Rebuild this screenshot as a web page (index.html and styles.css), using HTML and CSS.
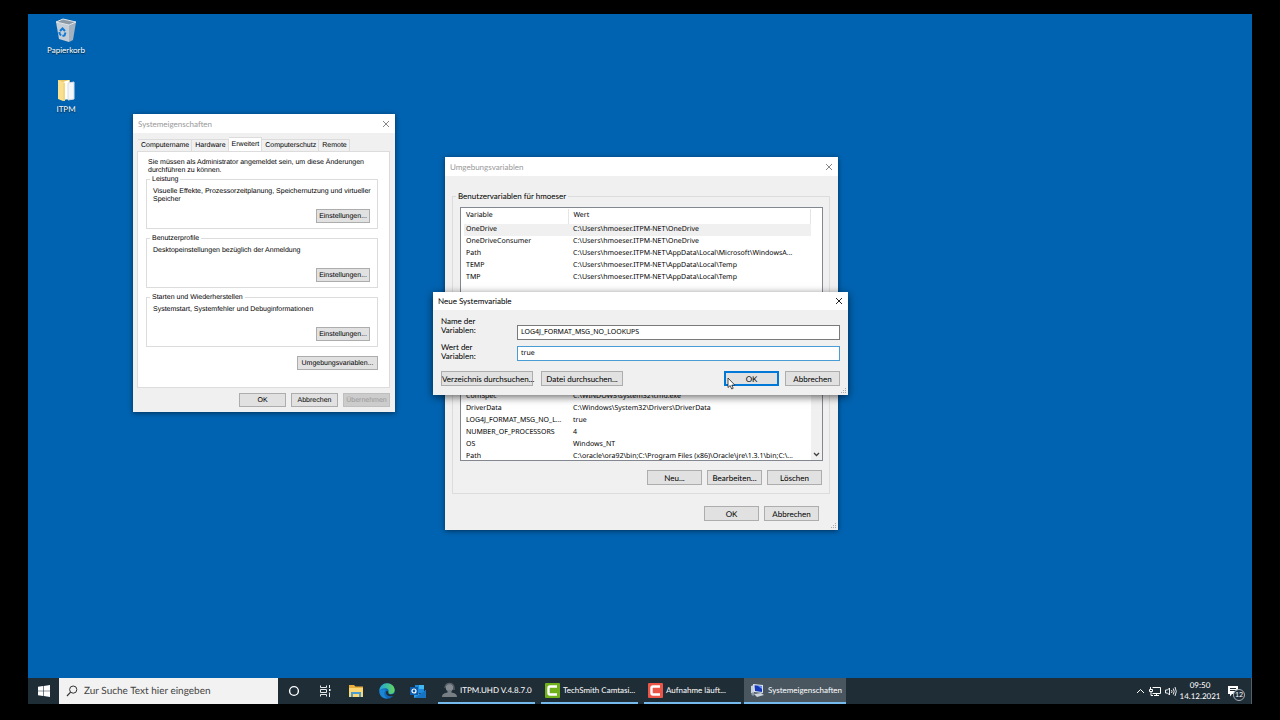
FILE: index.html
```html
<!DOCTYPE html>
<html lang="de">
<head>
    <meta charset="utf-8">
    <title>Desktop</title>
    <link rel="stylesheet" href="styles.css">
</head>
<body>
    <main class="desktop">
        <div class="shortcuts">
            <a class="shortcut" href="#">
                <svg width="24" height="26" viewBox="0 0 24 26">
                    <path d="M2 4 L9 1 L22 4 L15 7 Z" fill="#8d9aa5"/>
                    <path d="M2 4 L15 7 L15 24 L5 21 Z" fill="#c3ced8"/>
                    <path d="M15 7 L22 4 L19 22 L15 24 Z" fill="#a4b2bf"/>
                    <path d="M2 4 L9 1 L22 4 L15 7 Z" fill="none" stroke="#dfe6ec" stroke-width="1"/>
                    <path d="M6 13 L8.500 10.500 L11 13 M11.500 14.500 L10.500 17.500 L8.500 18 M7 17.500 L5.500 15.500 L5.500 14" fill="none" stroke="#1379d1" stroke-width="2"/>
                </svg>
                <span>Papierkorb</span>
            </a>
            <a class="shortcut" href="#">
                <svg width="24" height="26" viewBox="0 0 24 26">
                    <path d="M4 3 H16 V22 H4 Z" fill="#e8c667"/>
                    <path d="M4 3 L9 5 V24 L4 22 Z" fill="#f9e08e"/>
                    <path d="M9 5 L15 3 V22 L9 23 Z" fill="#fff"/>
                    <path d="M14 6 L20 5 V22 L14 23 Z" fill="#f3f6fa" stroke="#d6dde5" stroke-width="1"/>
                    <path d="M9 5 L11 6 V24 L9 24 Z" fill="#f3d884"/>
                </svg>
                <span>ITPM</span>
            </a>
        </div>

        <section class="window system">
            <header class="titlebar inactive">
                <h2>Systemeigenschaften</h2>
                <button class="close" aria-label="Schließen"><svg width="8" height="8" viewBox="0 0 8 8"><path d="M1 1 L7 7 M7 1 L1 7"/></svg></button>
            </header>
            <div class="system-body">
                <nav class="tabs">
                    <button>Computername</button>
                    <button>Hardware</button>
                    <button class="selected">Erweitert</button>
                    <button>Computerschutz</button>
                    <button>Remote</button>
                </nav>
                <div class="pane">
                    <p class="hint">Sie müssen als Administrator angemeldet sein, um diese Änderungen durchführen zu können.</p>
                    <fieldset>
                        <legend>Leistung</legend>
                        <div class="group">
                            <p>Visuelle Effekte, Prozessorzeitplanung, Speichernutzung und virtueller Speicher</p>
                            <button class="btn">Einstellungen...</button>
                        </div>
                    </fieldset>
                    <fieldset>
                        <legend>Benutzerprofile</legend>
                        <div class="group">
                            <p>Desktopeinstellungen bezüglich der Anmeldung</p>
                            <button class="btn">Einstellungen...</button>
                        </div>
                    </fieldset>
                    <fieldset>
                        <legend>Starten und Wiederherstellen</legend>
                        <div class="group">
                            <p>Systemstart, Systemfehler und Debuginformationen</p>
                            <button class="btn">Einstellungen...</button>
                        </div>
                    </fieldset>
                    <button class="btn env-btn">Umgebungsvariablen...</button>
                </div>
                <footer class="system-actions">
                    <button class="btn">OK</button>
                    <button class="btn">Abbrechen</button>
                    <button class="btn" disabled>Übernehmen</button>
                </footer>
            </div>
        </section>

        <section class="window env">
            <header class="titlebar inactive">
                <h2>Umgebungsvariablen</h2>
                <button class="close" aria-label="Schließen"><svg width="8" height="8" viewBox="0 0 8 8"><path d="M1 1 L7 7 M7 1 L1 7"/></svg></button>
            </header>
            <div class="env-body">
                <fieldset class="user-vars">
                    <legend>Benutzervariablen für hmoeser</legend>
                    <div class="list">
                        <table>
                            <thead>
                                <tr><th>Variable</th><th>Wert</th></tr>
                            </thead>
                            <tbody>
                                <tr class="current"><td>OneDrive</td><td>C:\Users\hmoeser.ITPM-NET\OneDrive</td></tr>
                                <tr><td>OneDriveConsumer</td><td>C:\Users\hmoeser.ITPM-NET\OneDrive</td></tr>
                                <tr><td>Path</td><td>C:\Users\hmoeser.ITPM-NET\AppData\Local\Microsoft\WindowsA...</td></tr>
                                <tr><td>TEMP</td><td>C:\Users\hmoeser.ITPM-NET\AppData\Local\Temp</td></tr>
                                <tr><td>TMP</td><td>C:\Users\hmoeser.ITPM-NET\AppData\Local\Temp</td></tr>
                            </tbody>
                        </table>
                    </div>
                </fieldset>
                <fieldset class="system-vars">
                    <div class="list scrolled">
                        <table>
                            <tbody>
                                <tr><td>ComSpec</td><td>C:\WINDOWS\system32\cmd.exe</td></tr>
                                <tr><td>DriverData</td><td>C:\Windows\System32\Drivers\DriverData</td></tr>
                                <tr><td>LOG4J_FORMAT_MSG_NO_L...</td><td>true</td></tr>
                                <tr><td>NUMBER_OF_PROCESSORS</td><td>4</td></tr>
                                <tr><td>OS</td><td>Windows_NT</td></tr>
                                <tr><td>Path</td><td>C:\oracle\ora92\bin;C:\Program Files (x86)\Oracle\jre\1.3.1\bin;C:\...</td></tr>
                            </tbody>
                        </table>
                        <div class="scrollbar">
                            <svg width="7" height="5" viewBox="0 0 7 5"><path d="M1 1 L3.500 3.500 L6 1" fill="none" stroke="#404040" stroke-width="1.300"/></svg>
                        </div>
                    </div>
                    <div class="actions">
                        <button class="btn">Neu...</button>
                        <button class="btn">Bearbeiten...</button>
                        <button class="btn">Löschen</button>
                    </div>
                </fieldset>
                <footer class="actions env-actions">
                    <button class="btn">OK</button>
                    <button class="btn">Abbrechen</button>
                </footer>
            </div>
            <svg class="grip" width="6" height="6" viewBox="0 0 6 6"><path d="M4 0h1v1h-1z M2 2h1v1h-1z M4 2h1v1h-1z M0 4h1v1h-1z M2 4h1v1h-1z M4 4h1v1h-1z"/></svg>
        </section>

        <section class="window dialog">
            <header class="titlebar">
                <h2>Neue Systemvariable</h2>
                <button class="close" aria-label="Schließen"><svg width="8" height="8" viewBox="0 0 8 8"><path d="M1 1 L7 7 M7 1 L1 7"/></svg></button>
            </header>
            <form class="dialog-body">
                <div class="field">
                    <label for="varName">Name der Variablen:</label>
                    <input type="text" id="varName" value="LOG4J_FORMAT_MSG_NO_LOOKUPS">
                </div>
                <div class="field">
                    <label for="varValue">Wert der Variablen:</label>
                    <input type="text" id="varValue" class="focused" value="true">
                </div>
                <div class="dialog-actions">
                    <button type="button" class="btn browse-dir">Verzeichnis durchsuchen...</button>
                    <button type="button" class="btn browse-file">Datei durchsuchen...</button>
                    <button type="button" class="btn default">OK</button>
                    <button type="button" class="btn">Abbrechen</button>
                </div>
            </form>
            <svg class="grip" width="6" height="6" viewBox="0 0 6 6"><path d="M4 0h1v1h-1z M2 2h1v1h-1z M4 2h1v1h-1z M0 4h1v1h-1z M2 4h1v1h-1z M4 4h1v1h-1z"/></svg>
        </section>

        <svg class="cursor" width="9" height="13" viewBox="0 0 9 13">
            <path d="M1 1 V10.500 L3.200 8.600 L4.700 12 L6.200 11.300 L4.800 8.100 H7.800 Z" fill="#fff" stroke="#222" stroke-width=".8"/>
        </svg>
    </main>

    <footer class="taskbar">
        <button class="start" aria-label="Start">
            <svg width="12" height="12" viewBox="0 0 12 12" fill="#fff"><path d="M0 1.700 L5.200 1 V5.700 H0 Z M5.800 .9 L12 0 V5.700 H5.800 Z M0 6.300 H5.200 V11 L0 10.300 Z M5.800 6.300 H12 V12 L5.800 11.100 Z"/></svg>
        </button>
        <label class="search">
            <svg width="12" height="12" viewBox="0 0 12 12"><circle cx="7.200" cy="4.600" r="3.600" fill="none" stroke="#333"/><path d="M4.600 7.200 L1 11" stroke="#333" stroke-width="1.200"/></svg>
            <input type="text" placeholder="Zur Suche Text hier eingeben" aria-label="Suche">
        </label>
        <div class="pinned">
            <button aria-label="Cortana"><svg width="12" height="12" viewBox="0 0 12 12"><circle cx="6" cy="6" r="4.400" fill="none" stroke="#fff" stroke-width="1.400"/></svg></button>
            <button aria-label="Taskansicht"><svg width="12" height="12" viewBox="0 0 12 12" fill="none" stroke="#e6eaed"><path d="M1.500 0.500 V2.500 H7.500 V0.500 M1.500 11.500 V9.500 H7.500 V11.500 M1.500 4.500 H7.500 V7.500 H1.500 Z M10.500 0 V3 M10.500 7.500 V12"/><path d="M10 4h1.500v2H10z" fill="#fff" stroke="none"/></svg></button>
            <button aria-label="Explorer"><svg width="16" height="14" viewBox="0 0 16 14"><path d="M1 1 H6 L7.500 2.500 H15 V13 H1 Z" fill="#e9ae3c"/><path d="M1 4 H15 V13 H1 Z" fill="#fbd672"/><path d="M3 8 H13 V13 H11 V10 H5 V13 H3 Z" fill="#4a9bd0"/></svg></button>
            <button aria-label="Edge">
                <svg width="16" height="16" viewBox="0 0 16 16">
                    <defs><linearGradient id="edgeTop" x1="0" x2="1"><stop offset="0" stop-color="#1fa5df"/><stop offset="1" stop-color="#62d65b"/></linearGradient></defs>
                    <circle cx="8" cy="8" r="7.700" fill="#1268b8"/>
                    <path d="M.4 8 C.5 3.500 4 .3 8 .3 C12.500 .3 15.700 3.500 15.700 7 C15.700 9.500 13.800 11 11.500 11 C9.800 11 9 10.300 9.300 9.600 C10.500 7.500 9 5.300 6.300 5.300 C3.500 5.300 1.200 6.500 .4 8 Z" fill="url(#edgeTop)"/>
                    <path d="M9.300 9.600 C8.800 11.300 11.500 12.300 15 10.700 L16 11 L14.300 12.700 C11 14.300 6.500 12.500 7 8.700 C7.600 7.500 9.300 8 9.300 9.600 Z" fill="#1f2d37"/>
                    <path d="M.4 8 C1.500 6.500 4.500 5.500 7 6.700 C4.500 8.500 4.500 13 8.500 15.300 C4 16 .2 12.500 .4 8 Z" fill="#1b86d5"/>
                </svg>
            </button>
            <button aria-label="Outlook"><svg width="16" height="14" viewBox="0 0 16 14"><path d="M5 1 H14 V9 H5 Z" fill="#1c89dc"/><path d="M9 1 H14 V5 H9 Z" fill="#43b8f0"/><path d="M4 7 L10 10 L16 6 V14 H4 Z" fill="#2f9fe5"/><path d="M4 14 L16 6 V14 Z" fill="#1674c3"/><path d="M0 3 H8 V11 H0 Z" fill="#0c5bab"/><circle cx="4" cy="7" r="2" fill="none" stroke="#fff" stroke-width="1.200"/></svg></button>
        </div>
        <div class="tasks">
            <button class="task">
                <svg width="15" height="16" viewBox="0 0 15 16"><circle cx="7.500" cy="5.500" r="3.800" fill="#858c91"/><path d="M0 15 C0 11.500 3 11 5.500 10.500 V8 H9.500 V10.500 C12 11 15 11.500 15 15 Z" fill="#777f85"/><path d="M3 6 C3 0 12 0 12 6 V8" fill="none" stroke="#59626a" stroke-width="1.400"/></svg>
                <span>ITPM.UHD V.4.8.7.0</span>
            </button>
            <button class="task">
                <svg width="15" height="15" viewBox="0 0 15 15"><rect width="15" height="15" rx="1" fill="#6fb01c"/><path d="M12 3.500 H5 Q3.500 3.500 3.500 5 V10 Q3.500 11.500 5 11.500 H12" fill="none" stroke="#fff" stroke-width="2.400"/></svg>
                <span>TechSmith Camtasi...</span>
            </button>
            <button class="task">
                <svg width="15" height="15" viewBox="0 0 15 15"><rect width="15" height="15" rx="1" fill="#ea5548"/><path d="M12 3.500 H5 Q3.500 3.500 3.500 5 V10 Q3.500 11.500 5 11.500 H12" fill="none" stroke="#fff" stroke-width="2.400"/></svg>
                <span>Aufnahme läuft...</span>
            </button>
            <button class="task active">
                <svg width="15" height="15" viewBox="0 0 15 15"><path d="M1 3 L4 2 V11 L1 10 Z" fill="#c7d0da"/><path d="M3 1 L13 2 V10 L4 9 Z" fill="#dce4ee"/><path d="M4.500 2.300 L12 3 V9 L5 8 Z" fill="#1738b8"/><path d="M8 3 L12 3.200 V6 Z" fill="#6e9cf0"/><path d="M4 11 L11 10 L14 12 L7 14 Z" fill="#cbd3dc"/><path d="M1 11 L3 9 L5 11 L3 13 Z" fill="#8b98a8"/></svg>
                <span>Systemeigenschaften</span>
            </button>
        </div>
        <div class="tray">
            <svg width="9" height="6" viewBox="0 0 9 6"><path d="M1 5 L4.500 1.500 L8 5" fill="none" stroke="#fff"/></svg>
            <svg width="12" height="11" viewBox="0 0 12 11" fill="none" stroke="#fff"><path d="M3.500 1.500 H11.500 V7.500 H3.500 M5 9.500 H10 M7.500 7.500 V9.500 M1.500 1 V3 M.5 3.500 H3.500 V5.500 H.5 Z M2 6 V9.500 H4"/></svg>
            <svg width="12" height="11" viewBox="0 0 12 11" fill="none" stroke="#fff"><path d="M.5 4 H2.500 L4.500 2 V9 L2.500 7 H.5 Z M6.500 4 Q7.500 5.500 6.500 7 M8.300 2.500 Q10 5.500 8.300 8.500 M10 1 Q12.500 5.500 10 10" stroke-width=".9"/></svg>
            <time class="clock" datetime="2021-12-14T09:50"><span>09:50</span><span>14.12.2021</span></time>
            <button class="notify" aria-label="Benachrichtigungen">
                <svg width="12" height="11" viewBox="0 0 12 11"><path d="M1 0 H11 V8 H5 L3 10.500 V8 H1 Z" fill="#fff"/><path d="M3 2.500 H9 M3 4.500 H9" stroke="#1f2d37"/></svg>
                <span class="badge">12</span>
            </button>
        </div>
    </footer>
</body>
</html>
```

FILE: styles.css
```css
* {
    box-sizing: border-box;
}

body {
    margin: 0;
    padding: 14px 28px 16px;
    height: 100vh;
    display: flex;
    flex-direction: column;
    background: #000;
    color: #000;
    font-family: Lato, "Noto Sans", sans-serif;
    font-size: 8px;
    line-height: 12px;
    text-rendering: geometricPrecision;
    overflow: hidden;
}

button, input {
    font: inherit;
    color: inherit;
    margin: 0;
    padding: 0;
    border: none;
    background: none;
    text-rendering: inherit;
}

h2, p {
    margin: 0;
    font-size: inherit;
    font-weight: normal;
}

svg {
    display: block;
    flex: none;
}

fieldset {
    margin: 0;
    padding: 0;
    min-width: 0;
    border: 1px solid #dcdcdc;
}

legend {
    margin-left: 3px;
    padding: 0 2px;
}

/* desktop */
.desktop {
    position: relative;
    flex: 1;
    background: #0063b1;
}

.shortcuts {
    display: flex;
    flex-direction: column;
    gap: 21px;
    width: 76px;
    padding-top: 4px;
}

.shortcut {
    display: flex;
    flex-direction: column;
    align-items: center;
    color: #fff;
    text-decoration: none;
    text-shadow: 0 1px 1px #023;
}

/* windows */
.window {
    position: absolute;
    background: #f0f0f0;
    box-shadow: 0 1px 5px rgba(0, 0, 0, 0.5);
}

.titlebar {
    display: flex;
    align-items: center;
    justify-content: space-between;
    height: 19px;
    padding: 0 5px;
    background: #fff;
}

.close svg {
    fill: none;
    stroke: #222;
}

.inactive {
    color: #999;
}

.inactive .close svg {
    stroke: #888;
}

.btn {
    height: 15px;
    min-width: 55px;
    line-height: 12px;
    border: 1px solid #adadad;
    background: #e1e1e1;
    white-space: nowrap;
}

.grip {
    position: absolute;
    right: 1px;
    bottom: 1px;
    fill: #aaa;
}

/* system properties */
.system {
    left: 105px;
    top: 100px;
    width: 262px;
    line-height: 8px;
}

.system-body {
    padding: 4px 5px 5px 4px;
    font-family: "Liberation Sans", Arial, sans-serif;
    font-size: 7px;
}

.tabs {
    display: flex;
    align-items: flex-end;
    padding-left: 1px;
}

.tabs button {
    height: 12px;
    padding: 1px 2px 0 3px;
    border: 1px solid #dcdcdc;
    border-bottom: none;
    border-left: none;
}

.tabs .selected {
    height: 14px;
    background: #fff;
}

.pane {
    display: flex;
    flex-direction: column;
    padding: 7px 11px 17px 8px;
    background: #fff;
    border: 1px solid #dcdcdc;
}

.hint {
    padding: 0 2px;
}

.pane fieldset {
    margin-bottom: 5px;
}

.pane legend {
    line-height: 9px;
}

.group {
    display: flex;
    flex-direction: column;
    justify-content: space-between;
    align-items: flex-start;
    min-height: 44px;
    padding: 4px 0 5px 6px;
}

.system .btn {
    height: 14px;
    min-width: 47px;
    line-height: 11px;
    padding: 0 2px;
}

.group .btn, .env-btn {
    align-self: flex-end;
}

.group .btn {
    margin-right: 7px;
}

.system .env-btn {
    min-width: 81px;
    margin-top: 4px;
}

.system-actions {
    display: flex;
    justify-content: flex-end;
    gap: 5px;
    padding-top: 5px;
}

.btn:disabled {
    color: #999;
    background: #ccc;
    border-color: #bfbfbf;
}

/* environment variables */
.env {
    left: 417px;
    top: 143px;
    width: 393px;
}

.env-body {
    padding: 14px 8px 9px 7px;
}

.user-vars {
    padding: 5px 0 7px;
}

.system-vars {
    margin-top: 14px;
    padding: 7px 0 8px;
}

.list {
    display: flex;
    height: 92px;
    margin: 0 6px 0 7px;
    padding: 1px 0 0 3px;
    border: 1px solid #828790;
    background: #fff;
    overflow: hidden;
}

.list table {
    width: 347px;
    flex: none;
    table-layout: fixed;
    border-collapse: collapse;
    align-self: flex-start;
}

.list th, .list td {
    height: 12px;
    padding: 0 0 0 5px;
    text-align: left;
    font-weight: normal;
    white-space: nowrap;
}

.list table, .field input {
    font-family: "Noto Sans", "Open Sans", sans-serif;
    font-size: 7px;
}

.list th {
    height: 15px;
    padding-bottom: 2px;
    border-right: 1px solid #e5e5e5;
}

.list th:first-child, .list td:first-child {
    width: 104px;
    padding-left: 2px;
}

.list .current {
    background: #f0f0f0;
}

.list.scrolled {
    height: 132px;
    padding-top: 0;
}

.list.scrolled table {
    margin-top: 61px;
}

.scrollbar {
    display: flex;
    align-items: flex-end;
    justify-content: center;
    flex: 1;
    padding-bottom: 3px;
    background: #f0f0f0;
}

.actions {
    display: flex;
    justify-content: flex-end;
    gap: 5px;
    padding: 9px 7px 0 0;
}

.env-actions {
    padding: 12px 11px 0 0;
}

/* new variable dialog */
.dialog {
    left: 405px;
    top: 278px;
    width: 415px;
    box-shadow: 0 2px 8px rgba(0, 0, 0, 0.6);
}

.dialog .titlebar {
    height: 18px;
}

.dialog-body {
    display: flex;
    flex-direction: column;
    gap: 3px;
    padding: 7px 8px 9px;
}

.field {
    display: grid;
    grid-template-columns: 50px 1fr;
    column-gap: 26px;
    align-items: end;
}

.field label {
    align-self: start;
    line-height: 9px;
}

.field input {
    height: 15px;
    padding: 0 3px;
    border: 1px solid #7a7a7a;
    background: #fff;
}

.field:first-child input {
    margin-top: 8px;
}

.field .focused {
    border-color: #4a9cd4;
}

.dialog-actions {
    display: flex;
    gap: 6px;
    padding-top: 7px;
}

.browse-dir {
    width: 92px;
    margin-right: 2px;
}

.browse-file {
    width: 82px;
    margin-right: auto;
}

.btn.default {
    border: 2px solid #0078d7;
    line-height: 10px;
}

.cursor {
    position: absolute;
    left: 699px;
    top: 363px;
}

/* taskbar */
.taskbar {
    display: flex;
    height: 26px;
    background: #1f2d37;
    color: #fff;
}

.start {
    display: flex;
    align-items: center;
    justify-content: center;
    width: 31px;
}

.search {
    display: flex;
    align-items: center;
    gap: 6px;
    width: 219px;
    padding: 0 7px;
    background: #f2f2f2;
    font-size: 10px;
}

.search input {
    flex: 1;
    min-width: 0;
    outline: none;
}

.search input::placeholder {
    color: #444;
    opacity: 1;
}

.pinned {
    display: flex;
}

.pinned button {
    display: flex;
    align-items: center;
    justify-content: center;
    width: 31px;
}

.tasks {
    display: flex;
    gap: 6px;
    margin-left: 5px;
}

.task {
    display: flex;
    align-items: center;
    gap: 3px;
    width: 97px;
    padding: 0 4px;
    border-bottom: 2px solid #76b9ed;
    white-space: nowrap;
}

.task.active {
    width: 102px;
    margin-left: -3px;
    padding-left: 6px;
    background: #495660;
}

.tray {
    display: flex;
    align-items: center;
    gap: 4px;
    margin-left: auto;
    padding-right: 8px;
    border-right: 1px solid #55616a;
}

.clock {
    display: flex;
    flex-direction: column;
    align-items: center;
    width: 38px;
    line-height: 11px;
}

.notify {
    position: relative;
    margin-left: 4px;
    padding-right: 4px;
}

.badge {
    position: absolute;
    right: -2px;
    top: 3px;
    width: 12px;
    height: 12px;
    border: 1px solid #aab2b8;
    border-radius: 50%;
    background: #1f2d37;
    font-size: 7px;
    line-height: 10px;
    text-align: center;
}
```
